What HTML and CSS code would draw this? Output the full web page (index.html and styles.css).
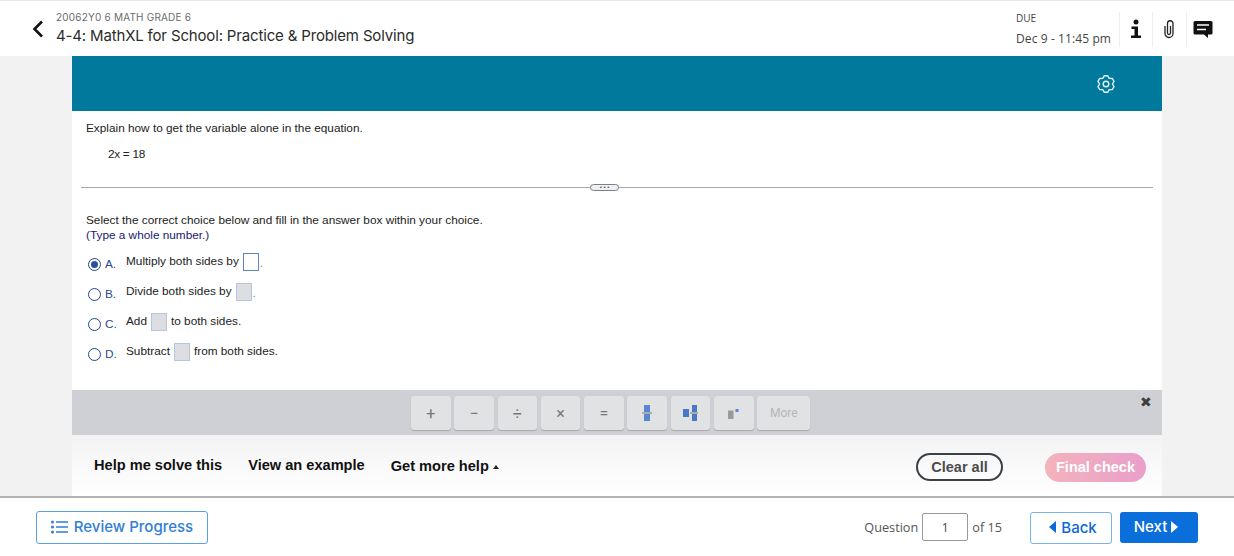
FILE: index.html
```html
<!DOCTYPE html>
<html lang="en">
<head>
<meta charset="utf-8">
<title>MathXL for School</title>
<link rel="stylesheet" href="styles.css">
</head>
<body>
<div class="app">
  <header class="top">
    <svg class="back" width="14" height="20" viewBox="0 0 14 20"><path d="M11 2.500 3.500 10l7.500 7.500" fill="none" stroke="#111" stroke-width="2.600"/></svg>
    <div class="crumb">
      <div class="course">20062Y0 6 MATH GRADE 6</div>
      <div class="title">4-4: MathXL for School: Practice &amp; Problem Solving</div>
    </div>
    <div class="due">
      <div class="due-label">DUE</div>
      <div class="due-date">Dec 9 - 11:45 pm</div>
    </div>
    <div class="tool tool-first">
      <svg class="icon-i" width="14" height="22" viewBox="0 0 14 22"><circle cx="7" cy="4" r="2.500" fill="#111"/><path d="M2.500 8.500H9V17.500H12V20H2V17.500H5.500V11H2.500Z" fill="#111"/></svg>
    </div>
    <div class="tool">
      <svg class="icon-clip" width="10" height="19" viewBox="0 0 10 19"><path d="M6.500 6V13a1.500 1.500 0 0 1-3 0V3.500a2.750 2.750 0 0 1 5.500 0V13.500a4 4 0 0 1-8 0V6" fill="none" stroke="#222" stroke-width="1.300"/></svg>
    </div>
    <div class="tool tool-last">
      <svg width="20" height="19" viewBox="0 0 20 19"><path d="M2 1h16a1.500 1.500 0 0 1 1.500 1.500V13a1.500 1.500 0 0 1-1.500 1.500h-3V18l-4-3.500H2A1.500 1.500 0 0 1 .5 13V2.500A1.500 1.500 0 0 1 2 1Z" fill="#111"/><path d="M4 5h12M4 9.500h9" stroke="#fff" stroke-width="1.600"/></svg>
    </div>
  </header>

  <main class="stage">
    <section class="panel">
      <div class="teal">
        <svg width="18" height="20" viewBox="0 0 18 20"><polygon points="7.200,1.800 10.800,1.800 12.200,4.400 15.400,4.500 17,7.400 15.400,10 17,12.600 15.400,15.500 12.200,15.600 10.800,18.200 7.200,18.200 5.800,15.600 2.600,15.500 1,12.600 2.600,10 1,7.400 2.600,4.500 5.800,4.400" fill="none" stroke="#dff3f8" stroke-width="1.400" stroke-linejoin="round"/><circle cx="9" cy="10" r="2.800" fill="none" stroke="#dff3f8" stroke-width="1.400"/></svg>
      </div>
      <div class="question">
        <p class="prompt">Explain how to get the variable alone in the equation.</p>
        <p class="equation">2x = 18</p>
        <div class="divider"><span class="grip">• • •</span></div>
        <p class="instr">Select the correct choice below and fill in the answer box within your choice.</p>
        <p class="hint">(Type a whole number.)</p>
        <div class="choice">
          <span class="radio radio-on"></span><span class="letter">A.</span>
          <span>Multiply both sides by</span><span class="box box-on"></span><span class="dot">.</span>
        </div>
        <div class="choice">
          <span class="radio"></span><span class="letter">B.</span>
          <span>Divide both sides by</span><span class="box"></span><span class="dot">.</span>
        </div>
        <div class="choice">
          <span class="radio"></span><span class="letter">C.</span>
          <span>Add</span><span class="box"></span><span>to both sides.</span>
        </div>
        <div class="choice">
          <span class="radio"></span><span class="letter">D.</span>
          <span>Subtract</span><span class="box"></span><span>from both sides.</span>
        </div>
      </div>
      <div class="palette">
        <button class="key">+</button>
        <button class="key">−</button>
        <button class="key">÷</button>
        <button class="key">×</button>
        <button class="key">=</button>
        <button class="key"><svg width="10" height="16" viewBox="0 0 10 16"><path d="M2 0h6v7H2zM2 9h6v7H2z" fill="#5b85d0"/><path d="M0 8h10" stroke="#888" stroke-width="1.200"/></svg></button>
        <button class="key"><svg width="15" height="16" viewBox="0 0 15 16"><path d="M0 4h6v8H0zM9 0h5v7H9zM9 9h5v7H9z" fill="#4a78c8"/><path d="M7 8h8" stroke="#888" stroke-width="1.200"/></svg></button>
        <button class="key"><svg width="11" height="11" viewBox="0 0 11 11"><path d="M0 2.500h5.500V11H0z" fill="#9a9a9a"/><path d="M7.500 1h3v3h-3z" fill="#5b85d0"/></svg></button>
        <button class="key key-more">More</button>
        <span class="close">✖</span>
      </div>
      <div class="actions">
        <a class="help">Help me solve this</a>
        <a class="help help-2">View an example</a>
        <a class="help help-3">Get more help <span class="caret"></span></a>
        <button class="clear">Clear all</button>
        <button class="final">Final check</button>
      </div>
    </section>
  </main>

  <footer class="bottom">
    <button class="review">
      <svg width="17" height="14" viewBox="0 0 17 14"><path d="M5 2h12M5 7h12M5 12h12" stroke="#2f7ed8" stroke-width="1.300"/><circle cx="1.500" cy="2" r="1.500" fill="#2f7ed8"/><circle cx="1.500" cy="7" r="1.500" fill="#2f7ed8"/><circle cx="1.500" cy="12" r="1.500" fill="#2f7ed8"/></svg>
      Review Progress
    </button>
    <div class="pager">
      <span>Question</span><span class="page-box">1</span><span>of 15</span>
    </div>
    <button class="nav nav-back"><span class="tri-l"></span>Back</button>
    <button class="nav nav-next">Next<span class="tri-r"></span></button>
  </footer>
</div>
</body>
</html>
```

FILE: styles.css
```css
* { box-sizing: border-box; }
html, body { margin: 0; padding: 0; height: 100%; overflow: hidden; background: #fff; }
p { margin: 0; }
button { font: inherit; padding: 0; cursor: pointer; }

.app { display: flex; flex-direction: column; width: 1234px; height: 556px; }

/* header */
.top { height: 56px; flex: none; display: flex; align-items: center; border-top: 1px solid #e6e6e6; background: #fff; padding-left: 31px; }
.back { flex: none; margin-right: 12px; }
.crumb { flex: 1; font-family: Inter, "Liberation Sans", sans-serif; margin-top: -1px; margin-left: -1px; }
.course { font-size: 10px; line-height: 14px; color: #6b6b6b; letter-spacing: .2px; }
.title { font-size: 15px; line-height: 22px; color: #2b2b2b; margin-top: 1px; letter-spacing: -.16px; }
.due { font-family: "Open Sans", sans-serif; color: #444; margin-right: 7px; width: 96px; margin-top: 2px; }
.due-label { font-size: 10px; line-height: 14px; }
.due-date { font-size: 12px; line-height: 18px; margin-top: 5px; white-space: nowrap; letter-spacing: .1px; }
.tool { width: 34px; height: 35px; display: flex; align-items: center; justify-content: center; border-left: 1px solid #eee; margin-top: 2px; }
.tool-first { width: 33px; }
.icon-i { margin-top: -2px; margin-left: -1px; }
.icon-clip { margin-left: -1px; }
.tool-last { width: 33px; margin-right: 15px; }

/* stage */
.stage { height: 440px; flex: none; background: #f2f2f2; padding-left: 72px; }
.panel { width: 1090px; height: 100%; background: #fff; display: flex; flex-direction: column; }
.teal { height: 55px; flex: none; background: #00799c; display: flex; align-items: center; justify-content: flex-end; padding-right: 47px; }
.question { flex: 1; font-family: "Liberation Sans", Arial, sans-serif; font-size: 11.800px; color: #222; padding: 10px 9px 0 9px; }
.prompt { padding-left: 5px; line-height: 14px; }
.equation { padding-left: 27px; margin-top: 12px; line-height: 14px; letter-spacing: -.3px; }
.divider { position: relative; height: 1px; background: #a4a7ad; margin-top: 26px; }
.grip { position: absolute; left: 509px; top: -3px; width: 29px; height: 7px; border: 1px solid #7b8088; border-radius: 4px; background: #eef0f2; font-size: 6px; line-height: 5px; text-align: center; color: #555; }
.instr { padding-left: 5px; margin-top: 25px; line-height: 14px; }
.hint { padding-left: 5px; line-height: 14px; margin-top: 1px; color: #1a1a6e; }
.choice { display: flex; align-items: center; height: 30px; padding-left: 7px; gap: 4px; white-space: nowrap; line-height: 14px; }
.hint + .choice { margin-top: 4px; }
.radio { width: 13px; height: 13px; border: 1px solid #21478f; border-radius: 50%; background: #fff; flex: none; margin-top: 6px; position: relative; }
.radio-on::after { content: ""; position: absolute; left: 2px; top: 2px; width: 7px; height: 7px; border-radius: 50%; background: #2d4f9e; }
.letter { color: #2a4a8f; width: 17px; margin-top: 6px; flex: none; }
.box { width: 16px; height: 18px; background: #dcdee1; border: 1px solid #b7c6dd; flex: none; margin-top: 2px; }
.box-on { background: #fff; border-color: #5b85c4; }
.dot { margin-left: -3px; color: #888; margin-top: 4px; }

/* palette */
.palette { position: relative; height: 45px; flex: none; background: #cfd0d5; display: flex; align-items: flex-start; padding: 6px 0 0 339px; gap: 3.800px; }
.key { width: 39.500px; height: 34px; background: #e1e2e4; border: 0; border-radius: 3px; box-shadow: 0 1px 1px #a9a9ad; font-family: Roboto, sans-serif; font-size: 16px; color: #777; display: flex; align-items: center; justify-content: center; }
.key-more { width: 53px; font-size: 12px; color: #b5b6b9; }
.close { position: absolute; left: 1068px; top: 4px; font-size: 14px; line-height: 16px; color: #3e3e3e; font-family: "DejaVu Sans", sans-serif; }

/* actions */
.actions { height: 61px; flex: none; background: linear-gradient(#f3f3f3, #fff); display: flex; align-items: flex-start; font-family: "Liberation Sans", Arial, sans-serif; font-weight: 700; font-size: 14.600px; color: #111; padding: 0 16px 0 22px; }
.help { line-height: 16px; margin-top: 22px; }
.help-2 { margin-left: 26px; }
.help-3 { margin-left: 26px; margin-top: 23px; flex: 1; }
.caret { display: inline-block; border: 3.500px solid transparent; border-top: 0; border-bottom: 4px solid #222; vertical-align: 2px; }
.clear { width: 87px; height: 28px; margin-top: 18px; padding-bottom: 1px; border: 2px solid #3a4048; border-radius: 14px; background: transparent; font-weight: 700; color: #4b4b4b; font-size: 14.500px; }
.final { width: 101px; height: 29px; margin-top: 18px; margin-left: 42px; padding-bottom: 2px; border: 0; border-radius: 15px; background: linear-gradient(90deg, #f4b3bc, #e89fcb); color: #fff; font-weight: 700; font-size: 14.500px; }

/* footer */
.bottom { flex: 1; display: flex; align-items: flex-start; border-top: 2px solid #b3b3b3; background: #fff; padding-left: 36px; }
.review { margin-top: 13px; width: 172px; height: 33px; padding-bottom: 2px; display: flex; align-items: center; justify-content: center; gap: 6px; background: #fff; border: 1px solid #5aa0e6; border-radius: 3px; color: #2f7ed8; font-family: Inter, sans-serif; font-weight: 500; font-size: 15px; }
.pager { margin-left: auto; margin-top: 15px; height: 28px; display: flex; align-items: center; gap: 4px; font-family: "Open Sans", sans-serif; font-size: 12.700px; color: #555; }
.page-box { width: 46px; height: 28px; border: 1px solid #999; border-radius: 2px; display: flex; align-items: center; justify-content: center; font-size: 12px; color: #444; }
.nav { margin-top: 14px; height: 31px; border-radius: 3px; font-family: Inter, sans-serif; font-weight: 500; font-size: 15px; display: flex; align-items: center; justify-content: center; gap: 4px; padding-bottom: 2px; }
.nav-back { width: 82px; margin-left: 28px; padding-left: 4px; background: #fff; border: 1px solid #76b3ee; color: #0a68d8; height: 32px; gap: 5px; }
.nav-next { width: 78px; margin-left: 8px; margin-right: 36px; padding-right: 6px; background: #0a6edb; border: 0; color: #fff; }
.tri-l { width: 0; height: 0; border: 6px solid transparent; border-left: 0; border-right: 7px solid #0a68d8; }
.tri-r { width: 0; height: 0; border: 6px solid transparent; border-right: 0; border-left: 7px solid #fff; }
```
